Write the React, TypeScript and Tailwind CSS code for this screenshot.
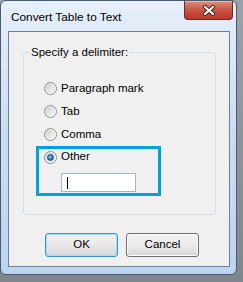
import React from "react";

const font = { fontFamily: '"Liberation Sans", Arial, sans-serif' };

function Radio({ checked = false }: { checked?: boolean }) {
  return (
    <span className="flex h-[13px] w-[13px] shrink-0 items-center justify-center rounded-full border border-[#8e8f8f] bg-gradient-to-br from-[#dcdcdc] via-[#f4f4f4] to-[#ffffff]">
      <span className="flex h-[9px] w-[9px] items-center justify-center rounded-full bg-gradient-to-br from-[#cfcfcf] to-[#f8f8f8]">
        {checked && (
          <span className="h-[7px] w-[7px] rounded-full border border-[#1b4f7d] bg-[radial-gradient(circle_at_40%_40%,#8fd3ff_0%,#2a8ad4_45%,#0d4e85_100%)]" />
        )}
      </span>
    </span>
  );
}

function Option({ label, checked }: { label: string; checked?: boolean }) {
  return (
    <label className="flex h-[23px] items-center gap-[4px] pl-[20px] text-[11.5px] text-black">
      <Radio checked={checked} />
      <span>{label}</span>
    </label>
  );
}

export default function App() {
  return (
    <div className="h-[282px] w-[243px] overflow-hidden bg-gradient-to-b from-[#9aa2ab] to-[#7f868e]" style={font}>
      <div className="flex h-[275px] w-[237px] flex-col rounded-[6px] border border-[#4a5a6e] bg-gradient-to-b from-[#e6eff9] via-[#c9ddf1] to-[#bcd5ee]">
        {/* title bar */}
        <div className="flex h-[30px] items-start justify-between">
          <span className="pl-[10px] pt-[9px] text-[11.8px] leading-[14px] text-black">Convert Table to Text</span>
          <button className="mr-[3px] flex h-[19px] w-[49px] items-center justify-center rounded-b-[4px] border border-t-0 border-[#6b2a22] bg-gradient-to-b from-[#dc8e80] via-[#c95445] to-[#b8392b] shadow-[inset_0_1px_0_0_#f0b8ad]">
            <svg width="14" height="11" viewBox="0 0 14 11">
              <path d="M3 2 L11 9 M11 2 L3 9" stroke="#3b2320" strokeWidth="4" strokeLinecap="round" />
              <path d="M3 2 L11 9 M11 2 L3 9" stroke="#ffffff" strokeWidth="2.2" strokeLinecap="round" />
            </svg>
          </button>
        </div>

        {/* client area */}
        <div className="ml-[7px] mr-[6px] flex h-[236px] flex-col border border-[#6d7f94] bg-[#f0f0f0]">
          <div className="ml-[14px] mt-[20px] flex h-[163px] w-[193px] flex-col rounded-[3px] border border-[#d5dfe5]">
            <span className="-mt-[8px] ml-[6px] w-fit bg-[#f0f0f0] px-[1px] text-[11.5px] leading-[14px] text-black">
              Specify a delimiter:
            </span>
            <div className="mt-[18px] flex flex-col">
              <Option label="Paragraph mark" />
              <Option label="Tab" />
              <Option label="Comma" />
            </div>
            <div className="ml-[12px] flex w-[125px] flex-col border-[3px] border-[#00a0e2] pb-[1px]">
              <label className="flex h-[16px] items-center gap-[4px] pl-[5px] text-[11.5px] text-black">
                <Radio checked />
                <span>Other</span>
              </label>
              <div className="ml-[22px] mt-[8px] flex h-[19px] w-[75px] items-center border border-[#9fb6cc] bg-white pl-[5px]">
                <span className="h-[12px] w-[1px] bg-black" />
              </div>
            </div>
          </div>

          <div className="ml-[36px] mt-[18px] flex gap-[8px]">
            <button className="h-[24px] w-[73px] rounded-[3px] border border-[#3c94c8] bg-gradient-to-b from-[#f2f2f2] via-[#e8e8e8] to-[#d8d8d8] text-[11.5px] text-black shadow-[inset_0_0_0_1px_#9fdcf7]">
              OK
            </button>
            <button className="h-[24px] w-[73px] rounded-[3px] border border-[#707070] bg-gradient-to-b from-[#f2f2f2] via-[#ebebeb] to-[#d6d6d6] text-[11.5px] text-black shadow-[inset_0_0_0_1px_#fcfcfc]">
              Cancel
            </button>
          </div>
        </div>
      </div>
    </div>
  );
}
